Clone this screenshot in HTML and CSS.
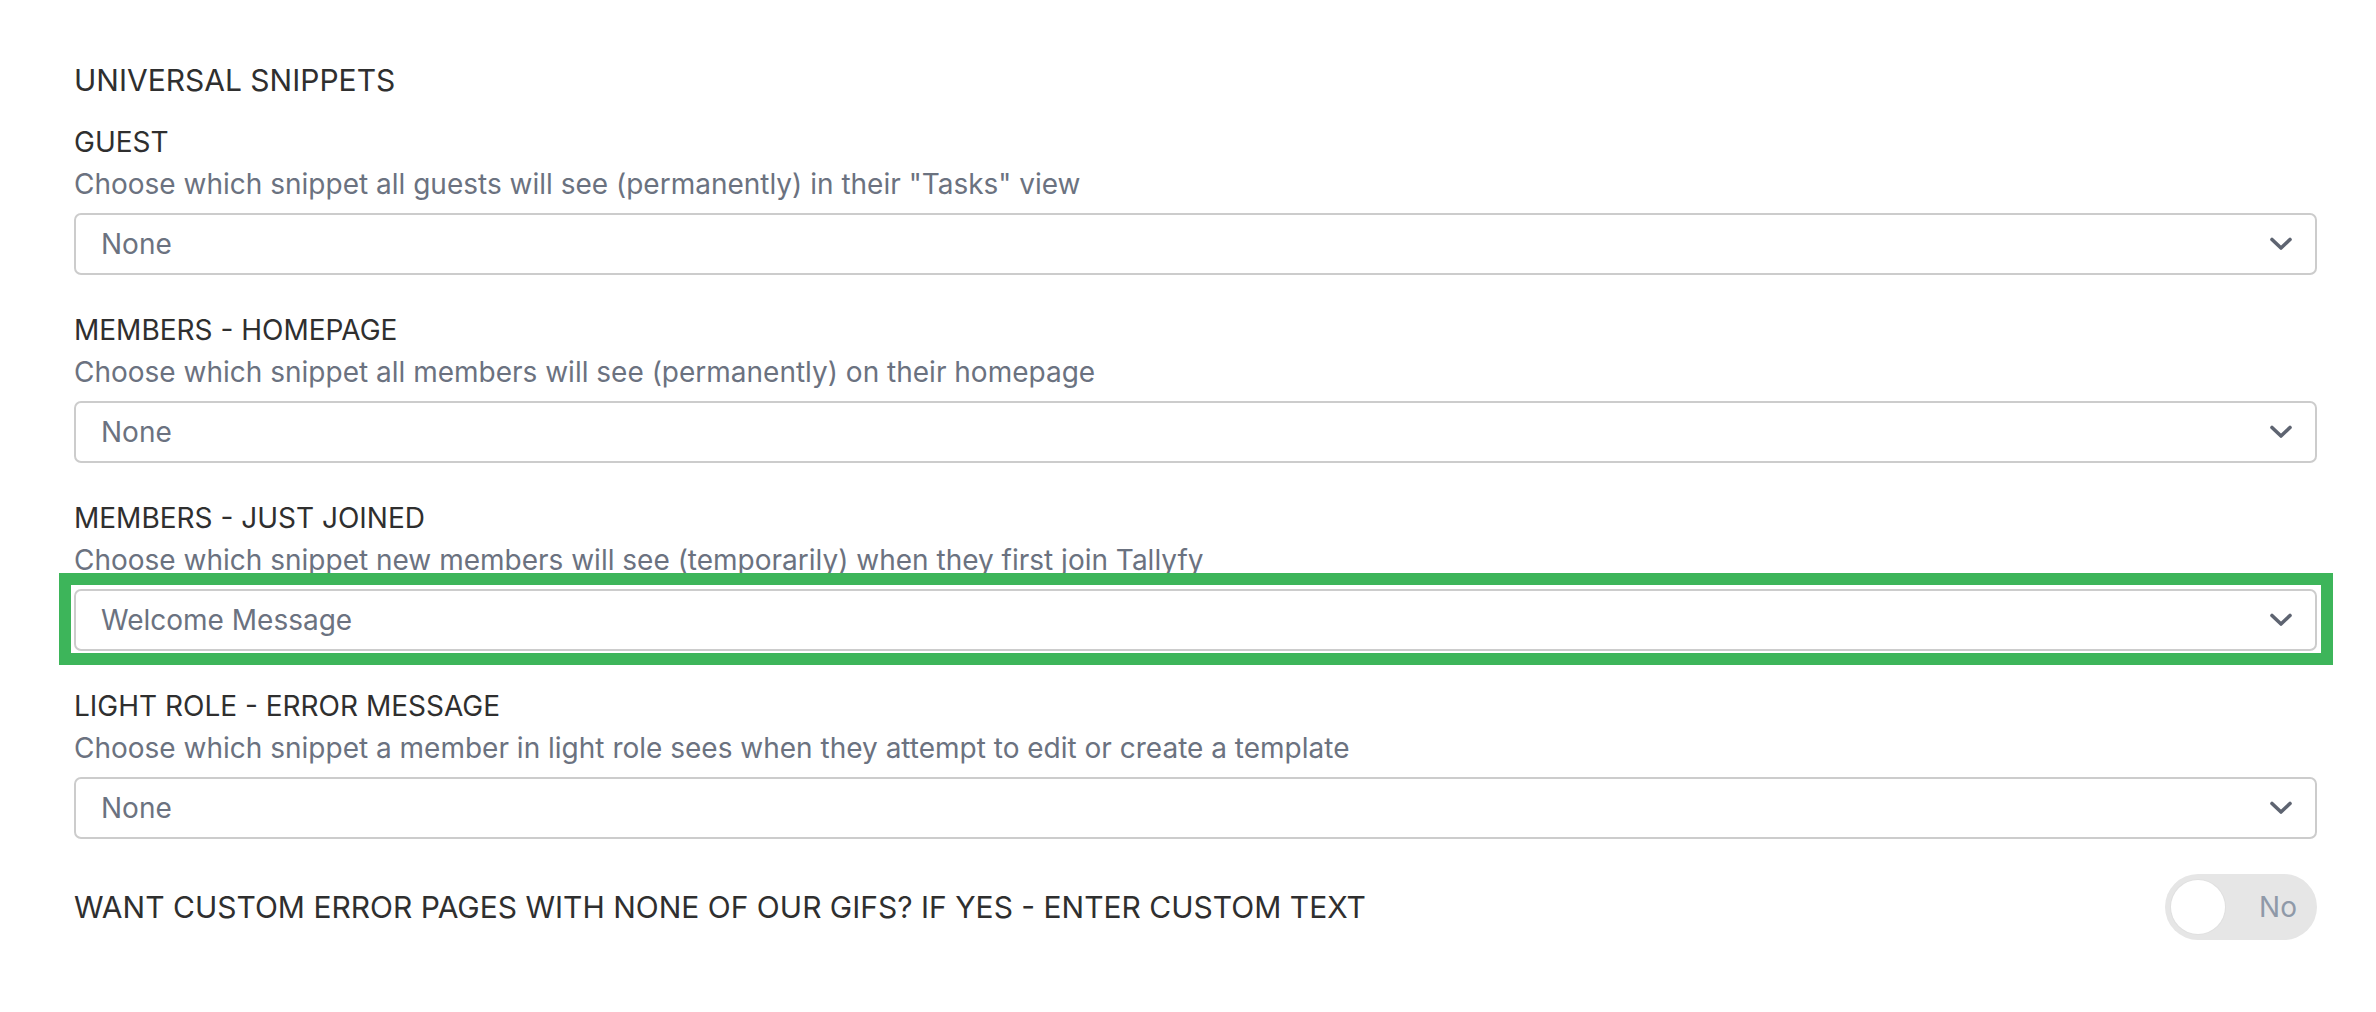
FILE: index.html
```html
<!DOCTYPE html>
<html lang="en">
<head>
<meta charset="utf-8">
<title>Universal Snippets</title>
<link rel="stylesheet" href="styles.css">
</head>
<body>
<main class="page">
  <h2 class="section-title">UNIVERSAL SNIPPETS</h2>
  <div class="fields">
    <div class="field">
      <div class="label">GUEST</div>
      <div class="desc">Choose which snippet all guests will see (permanently) in their "Tasks" view</div>
      <div class="select-wrap">
        <div class="select"><span class="value">None</span><svg class="chevron" width="24" height="14" viewBox="0 0 24 14"><path d="M3 2.5 L12 11 L21 2.5" fill="none" stroke="currentColor" stroke-width="3.6" stroke-linecap="round" stroke-linejoin="round"/></svg></div>
      </div>
    </div>
    <div class="field">
      <div class="label">MEMBERS - HOMEPAGE</div>
      <div class="desc">Choose which snippet all members will see (permanently) on their homepage</div>
      <div class="select-wrap">
        <div class="select"><span class="value">None</span><svg class="chevron" width="24" height="14" viewBox="0 0 24 14"><path d="M3 2.5 L12 11 L21 2.5" fill="none" stroke="currentColor" stroke-width="3.6" stroke-linecap="round" stroke-linejoin="round"/></svg></div>
      </div>
    </div>
    <div class="field">
      <div class="label">MEMBERS - JUST JOINED</div>
      <div class="desc">Choose which snippet new members will see (temporarily) when they first join Tallyfy</div>
      <div class="select-wrap">
        <div class="select"><span class="value">Welcome Message</span><svg class="chevron" width="24" height="14" viewBox="0 0 24 14"><path d="M3 2.5 L12 11 L21 2.5" fill="none" stroke="currentColor" stroke-width="3.6" stroke-linecap="round" stroke-linejoin="round"/></svg></div>
        <span class="annotation"></span>
      </div>
    </div>
    <div class="field">
      <div class="label">LIGHT ROLE - ERROR MESSAGE</div>
      <div class="desc">Choose which snippet a member in light role sees when they attempt to edit or create a template</div>
      <div class="select-wrap">
        <div class="select"><span class="value">None</span><svg class="chevron" width="24" height="14" viewBox="0 0 24 14"><path d="M3 2.5 L12 11 L21 2.5" fill="none" stroke="currentColor" stroke-width="3.6" stroke-linecap="round" stroke-linejoin="round"/></svg></div>
      </div>
    </div>
  </div>
  <div class="toggle-row">
    <div class="toggle-label">WANT CUSTOM ERROR PAGES WITH NONE OF OUR GIFS? IF YES - ENTER CUSTOM TEXT</div>
    <div class="toggle"><span class="knob"></span><span class="toggle-text">No</span></div>
  </div>
</main>
</body>
</html>
```

FILE: styles.css
```css
html, body {
  margin: 0;
  background: #ffffff;
}

body {
  font-family: Inter, "Noto Sans", "Liberation Sans", sans-serif;
  color: #333333;
}

.page {
  padding: 62px 59px 0 74px;
}

.section-title {
  margin: 0 0 28px;
  font-size: 30px;
  line-height: 36px;
  font-weight: 400;
  color: #2f2f2f;
}

.fields {
  display: flex;
  flex-direction: column;
  gap: 39px;
}

.label {
  font-size: 28px;
  line-height: 32px;
  color: #2f2f2f;
}

.desc {
  margin-top: 10px;
  font-size: 28px;
  line-height: 32px;
  color: #6b7280;
}

.select-wrap {
  position: relative;
  margin-top: 13px;
}

.select {
  box-sizing: border-box;
  height: 62px;
  border: 2px solid #cccccc;
  border-radius: 7px;
  background: #ffffff;
  display: flex;
  align-items: center;
  justify-content: space-between;
  padding: 0 22px 0 25px;
  font-size: 28px;
  color: #6b7280;
}

.chevron {
  color: #5e6471;
  display: block;
}

.annotation {
  position: absolute;
  left: -15px;
  top: -16px;
  right: -16px;
  bottom: -14px;
  border: 12px solid #3db55a;
  pointer-events: none;
}

.toggle-row {
  margin-top: 35px;
  display: flex;
  align-items: center;
  justify-content: space-between;
}

.toggle-label {
  font-size: 30px;
  line-height: 36px;
  color: #2f2f2f;
}

.toggle {
  position: relative;
  box-sizing: border-box;
  width: 152px;
  height: 66px;
  border-radius: 33px;
  background: #e6e6e6;
  display: flex;
  align-items: center;
  justify-content: flex-end;
  padding-right: 20px;
}

.knob {
  position: absolute;
  left: 6px;
  top: 6px;
  width: 54px;
  height: 54px;
  border-radius: 50%;
  background: #ffffff;
  box-shadow: 0 0 0 1px #e0e0e0;
}

.toggle-text {
  font-size: 28px;
  color: #8f99a8;
}
```
